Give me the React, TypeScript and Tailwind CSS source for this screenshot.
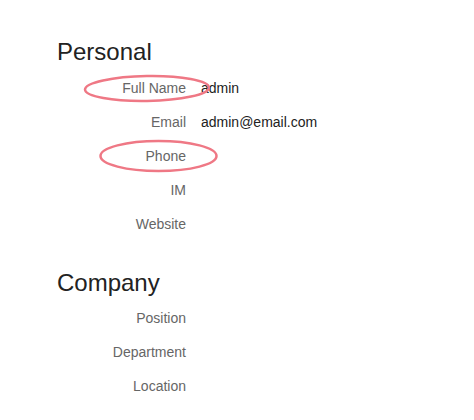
import React from 'react';

type Field = { label: string; value?: string };

const personal: Field[] = [
  { label: 'Full Name', value: 'admin' },
  { label: 'Email', value: 'admin@email.com' },
  { label: 'Phone' },
  { label: 'IM' },
  { label: 'Website' },
];

const company: Field[] = [{ label: 'Position' }, { label: 'Department' }, { label: 'Location' }];

function Section({ title, fields, className }: { title: string; fields: Field[]; className?: string }) {
  return (
    <section className={className}>
      <h2 className="text-[24px] leading-[28px] text-[#222]">{title}</h2>
      <div className="flex flex-col">
        {fields.map((f) => (
          <div key={f.label} className="flex items-center h-[34px] text-[14px]">
            <span className="w-[129px] text-right text-[#666]">{f.label}</span>
            <span className="ml-[15px] text-[#222]">{f.value ?? ''}</span>
          </div>
        ))}
      </div>
    </section>
  );
}

export default function App() {
  return (
    <div
      className="relative w-[474px] h-[420px] bg-white overflow-hidden pl-[57px] pt-[38px]"
      style={{ fontFamily: '"Liberation Sans", Arial, sans-serif' }}
    >
      <Section title="Personal" fields={personal} className="[&>h2]:mb-[5px]" />
      <Section title="Company" fields={company} className="mt-[28px] [&>h2]:mb-[4px]" />

      <svg className="absolute left-0 top-0 pointer-events-none" width="474" height="420">
        <ellipse cx="147" cy="88.5" rx="62" ry="12.5" fill="none" stroke="#ef7885" strokeWidth="2.5" transform="rotate(-1 147 88.5)" />
        <ellipse cx="158.5" cy="156" rx="58" ry="15" fill="none" stroke="#ef7885" strokeWidth="2.5" />
      </svg>
    </div>
  );
}
